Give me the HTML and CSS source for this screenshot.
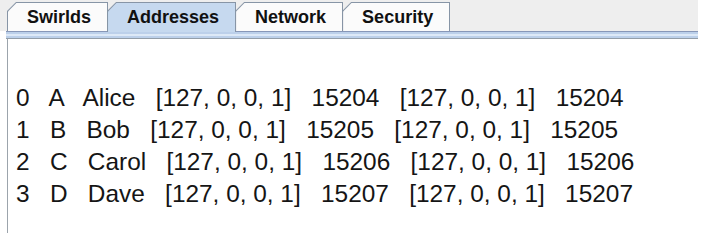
FILE: index.html
```html
<!DOCTYPE html>
<html lang="en">
<head>
    <meta charset="UTF-8">
    <title>Swirlds - Addresses</title>
    <link rel="stylesheet" href="styles.css">
</head>
<body>
    <div class="pane">
        <div class="tabs">
            <div class="tab"><div class="tab-label">Swirlds</div></div>
            <div class="tab selected"><div class="tab-label">Addresses</div></div>
            <div class="tab"><div class="tab-label">Network</div></div>
            <div class="tab"><div class="tab-label">Security</div></div>
        </div>
        <div class="band"></div>
        <div class="content">
            <div class="rows">
                <div class="row">0   A   Alice   [127, 0, 0, 1]   15204   [127, 0, 0, 1]   15204</div>
                <div class="row">1   B   Bob   [127, 0, 0, 1]   15205   [127, 0, 0, 1]   15205</div>
                <div class="row">2   C   Carol   [127, 0, 0, 1]   15206   [127, 0, 0, 1]   15206</div>
                <div class="row">3   D   Dave   [127, 0, 0, 1]   15207   [127, 0, 0, 1]   15207</div>
            </div>
        </div>
    </div>
</body>
</html>
```

FILE: styles.css
```css
* {
    margin: 0;
    padding: 0;
    box-sizing: border-box;
    font-family: "Liberation Sans", Arial, sans-serif;
}

body {
    background-color: #ffffff;
    color: #111111;
}

.pane {
    width: 698px;
}

/* Tab strip */
.tabs {
    height: 31px;
    background-color: #eeeeee;
    display: flex;
    align-items: flex-end;
    padding-left: 7px;
}

.tab {
    height: 29px;
    padding: 1px 1px 0 1px;
    background-color: #8795a6;
    clip-path: polygon(9px 0, 100% 0, 100% 100%, 0 100%, 0 9px);
}

.tab + .tab {
    margin-left: -1px;
}

.tab-label {
    height: 100%;
    display: flex;
    align-items: center;
    padding: 0 16px 0 19px;
    font-size: 18px;
    font-weight: 700;
    color: #111111;
    background-color: #fbfbfb;
    clip-path: polygon(8.4px 0, 100% 0, 100% 100%, 0 100%, 0 8.4px);
}

.tab.selected {
    position: relative;
    z-index: 1;
    height: 30px;
    margin-bottom: -1px;
}

.tab.selected .tab-label {
    background-color: #c6d9ef;
}

.band {
    margin-left: 6px;
    height: 8px;
    background: linear-gradient(#8797b8 0 1px, #bcd0ea 1px 3px, #dde9f7 3px 5px, #bcd0ea 5px 7px, #939ea9 7px 8px);
}

/* Text area */
.content {
    margin-left: 7px;
    height: 194px;
    border-left: 1px solid #9ca4ac;
    padding: 43px 0 0 8px;
}

.row {
    font-size: 24.4px;
    line-height: 32px;
    white-space: pre;
    color: #151515;
}
```
